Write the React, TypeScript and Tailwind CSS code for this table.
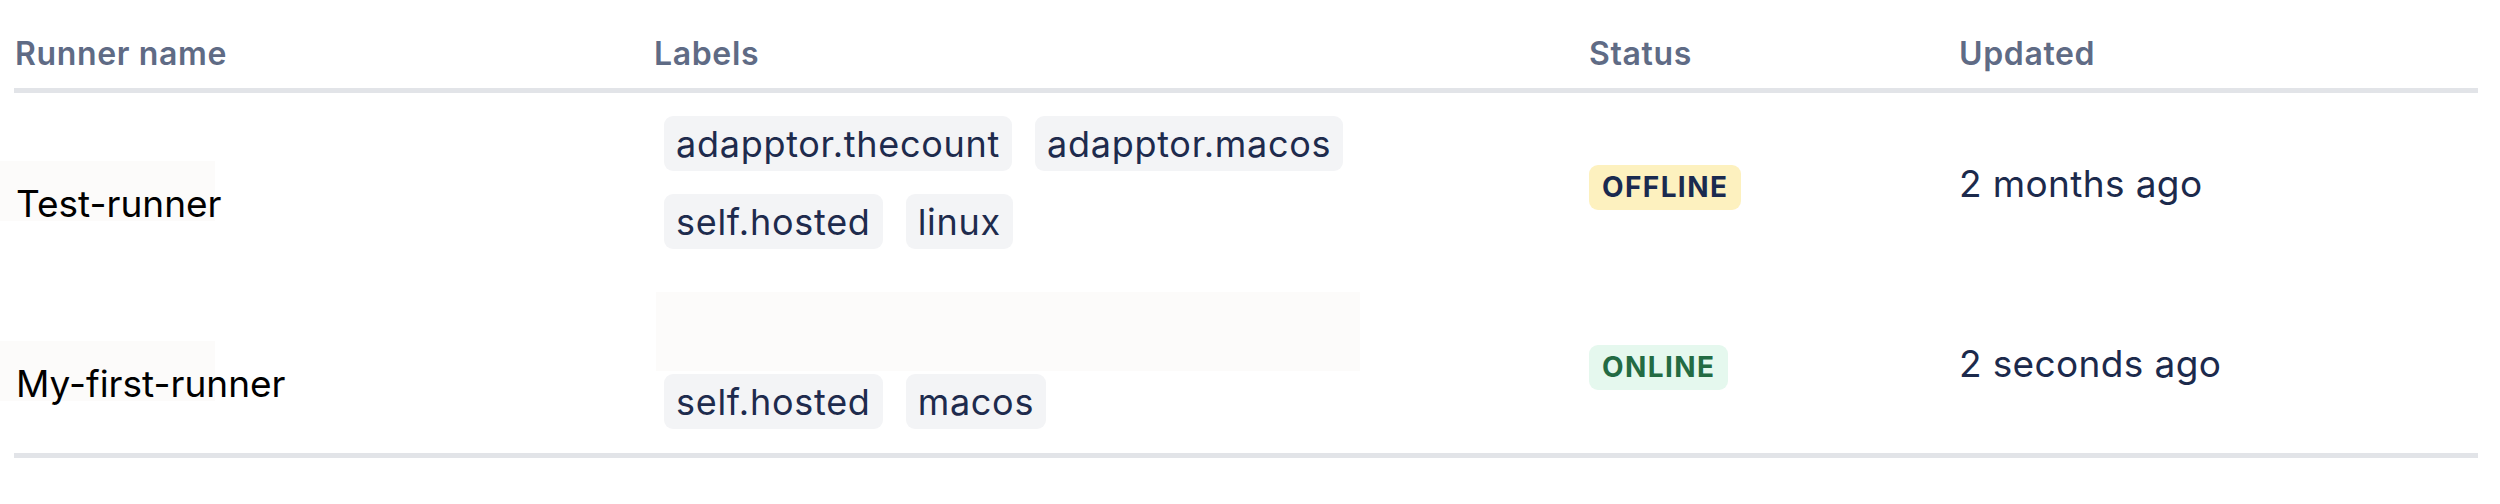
import React from "react";

const font = { fontFamily: "Inter, 'Noto Sans', sans-serif" };

function Chip({ text }: { text: string }) {
  return (
    <span className="flex h-[55px] items-center rounded-[9px] bg-[#f3f4f6] px-[12px] text-[36px] leading-none tracking-[0.02em] text-[#1e2b4d]">
      {text}
    </span>
  );
}

function Name({ text }: { text: string }) {
  return (
    <div className="self-center mt-[16px] -ml-[14px] h-[60px] w-[215px] bg-[#fcfbfa] pl-[16px] pt-[24px]">
      <span className="block whitespace-nowrap text-[37px] leading-none text-black">{text}</span>
    </div>
  );
}

function Badge({ text, kind }: { text: string; kind: "on" | "off" }) {
  const cls =
    kind === "off"
      ? "bg-[#fdf1bf] text-[#1a2a4f]"
      : "bg-[#e5f8ee] text-[#236b43]";
  return (
    <div className="self-center mt-[8px]">
      <span
        className={`inline-flex h-[45px] items-center rounded-[9px] px-[13px] text-[28px] font-bold uppercase leading-none tracking-[0.05em] ${cls}`}
      >
        {text}
      </span>
    </div>
  );
}

function Updated({ text }: { text: string }) {
  return (
    <div className="self-center text-[37px] leading-none tracking-[0.01em] text-[#1c2a4c]">{text}</div>
  );
}

export default function App() {
  return (
    <div className="h-[504px] w-[2500px] bg-white" style={font}>
      <div className="ml-[14px] w-[2464px]">
        <div className="grid grid-cols-[640px_935px_370px_1fr] border-b-[5px] border-[#e2e4e8] pt-[38px] pb-[18px] text-[32px] font-semibold leading-none tracking-[0.02em] text-[#5f6b85]">
          <div className="pl-[1px]">Runner name</div>
          <div>Labels</div>
          <div>Status</div>
          <div>Updated</div>
        </div>
        <div className="grid grid-cols-[640px_935px_370px_1fr]">
          <Name text="Test-runner" />
          <div className="flex flex-col gap-[23px] pl-[10px] pt-[23px] pb-[24px]">
            <div className="flex gap-[23px]">
              <Chip text="adapptor.thecount" />
              <Chip text="adapptor.macos" />
            </div>
            <div className="flex gap-[23px]">
              <Chip text="self.hosted" />
              <Chip text="linux" />
            </div>
          </div>
          <Badge text="Offline" kind="off" />
          <Updated text="2 months ago" />
        </div>
        <div className="grid grid-cols-[640px_935px_370px_1fr] border-b-[5px] border-[#e2e4e8]">
          <Name text="My-first-runner" />
          <div className="pt-[19px] pb-[24px]">
            <div className="ml-[2px] h-[79px] w-[704px] bg-[#fcfbfa]" />
            <div className="mt-[3px] flex gap-[23px] pl-[10px]">
              <Chip text="self.hosted" />
              <Chip text="macos" />
            </div>
          </div>
          <Badge text="Online" kind="on" />
          <Updated text="2 seconds ago" />
        </div>
      </div>
    </div>
  );
}
